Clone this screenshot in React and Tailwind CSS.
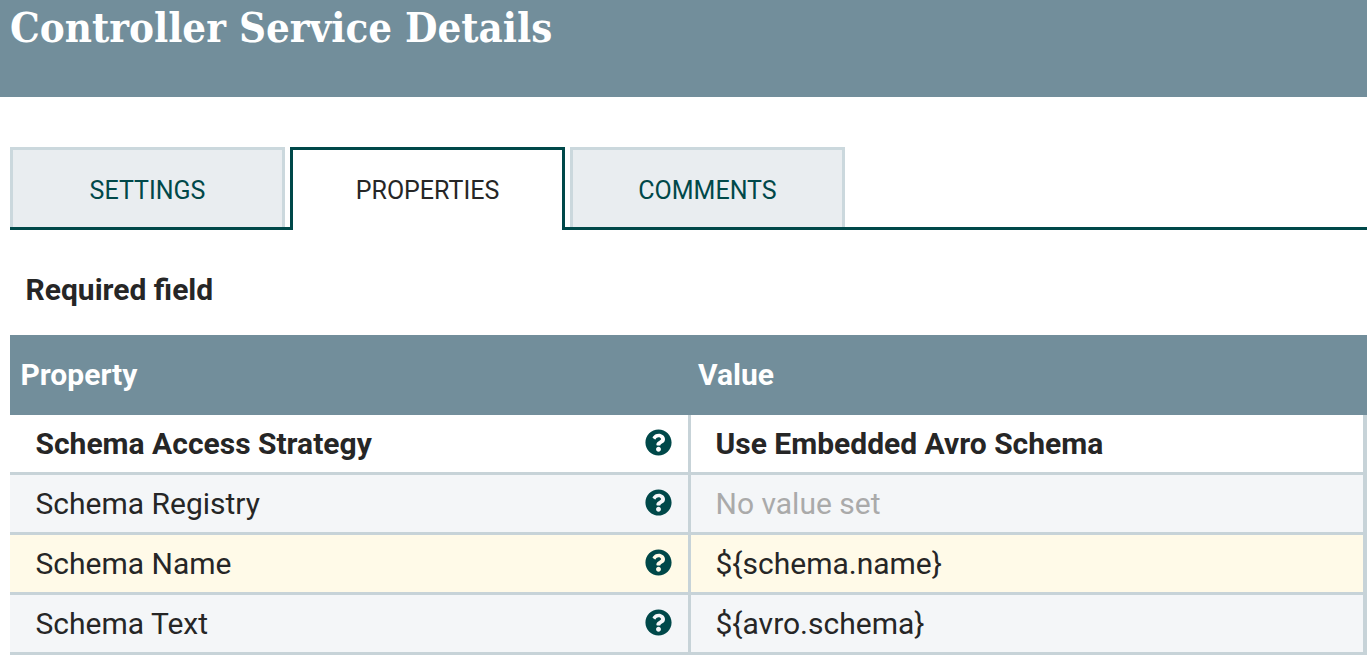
import React from 'react';
import { FaQuestionCircle } from 'react-icons/fa';

const tabs = [
  { label: 'SETTINGS', active: false },
  { label: 'PROPERTIES', active: true },
  { label: 'COMMENTS', active: false },
];

const rows = [
  { name: 'Schema Access Strategy', value: 'Use Embedded Avro Schema', bg: 'bg-white', bold: true },
  { name: 'Schema Registry', value: 'No value set', bg: 'bg-[#f4f6f8]', empty: true },
  { name: 'Schema Name', value: '${schema.name}', bg: 'bg-[#fffae8]' },
  { name: 'Schema Text', value: '${avro.schema}', bg: 'bg-[#f4f6f8]' },
];

const App = () => {
  return (
    <div className="h-[665px] w-[1367px] overflow-hidden bg-white font-['Roboto',sans-serif] text-[#262626]">
      {/* Header */}
      <div className="h-[97px] bg-[#728e9b] pl-[10px]">
        <h1 className="font-['DejaVu_Serif_Condensed','DejaVu_Serif',serif] text-[41.6px] font-bold leading-[56px] text-white">
          Controller Service Details
        </h1>
      </div>

      {/* Tabs */}
      <div className="ml-[10px] mt-[50px] flex h-[83px] border-b-[3px] border-[#004849]">
        {tabs.map((tab) => (
          <div
            key={tab.label}
            className={
              tab.active
                ? 'mx-[5px] flex h-[83px] w-[275px] items-center justify-center border-x-[3px] border-t-[3px] border-[#004849] bg-white pt-[2px] text-[25px] text-[#262626]'
                : 'flex h-[80px] w-[275px] items-center justify-center border-x-[3px] border-t-[3px] border-[#cbd8dd] bg-[#e9edf0] pt-[4px] text-[25px] text-[#004849]'
            }
          >
            {tab.label}
          </div>
        ))}
      </div>

      <p className="ml-[25.5px] mt-[42px] text-[30px] font-bold leading-[36px]">Required field</p>

      {/* Properties table */}
      <div className="ml-[10px] mt-[27px]">
        <div className="flex h-[80px] items-center bg-[#728e9b] pb-[2px] text-[30px] font-bold text-white">
          <div className="w-[688px] pl-[10.5px]">Property</div>
          <div>Value</div>
        </div>
        {rows.map((row) => (
          <div
            key={row.name}
            className={`flex h-[60px] border-b-[3px] border-r-[4px] border-[#c7d3d8] text-[30px] ${row.bg} ${row.bold ? 'font-bold' : 'font-normal'}`}
          >
            <div className="flex w-[681px] shrink-0 items-center justify-between border-r-[3px] border-[#c7d3d8] pl-[25.5px] pr-[16px]">
              <span>{row.name}</span>
              <FaQuestionCircle className="mb-[3px] text-[27px] text-[#004849]" />
            </div>
            <div className={`flex items-center pl-[24.5px] ${row.empty ? 'text-[#aaaaaa]' : ''}`}>{row.value}</div>
          </div>
        ))}
      </div>
    </div>
  );
};

export default App;
